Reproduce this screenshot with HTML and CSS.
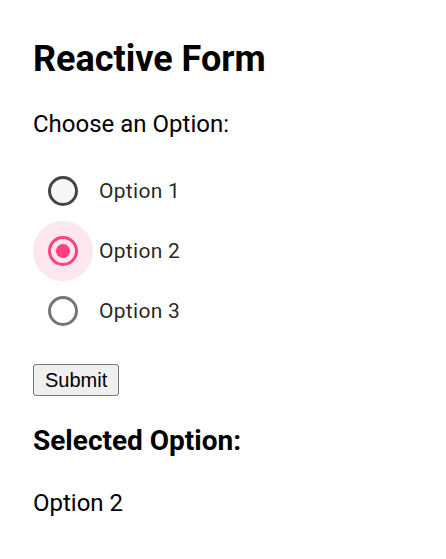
FILE: index.html
```html
<!DOCTYPE html>
<html>
<head>
<meta charset="utf-8">
<link rel="stylesheet" href="styles.css">
</head>
<body>
<h1 class="title">Reactive Form</h1>
<form class="form">
  <p class="prompt">Choose an Option:</p>
  <div class="radio-group">
    <label class="radio radio-hover">
      <span class="radio-touch"><span class="radio-outer"></span></span>
      <span class="radio-label">Option 1</span>
    </label>
    <label class="radio radio-checked">
      <span class="radio-touch"><span class="radio-outer"><span class="radio-inner"></span></span></span>
      <span class="radio-label">Option 2</span>
    </label>
    <label class="radio">
      <span class="radio-touch"><span class="radio-outer"></span></span>
      <span class="radio-label">Option 3</span>
    </label>
  </div>
  <button type="button" class="submit">Submit</button>
</form>
<h3 class="result-title">Selected Option:</h3>
<p class="result">Option 2</p>
</body>
</html>
```
FILE: styles.css
```css
html, body {
  margin: 0;
  padding: 0;
  background: #fff;
}
body {
  padding: 38px 33px 0;
  font-family: Roboto, "Noto Sans", sans-serif;
  color: #000;
}
.title {
  margin: 0;
  font-size: 36px;
  font-weight: 700;
  line-height: 42px;
}
.form {
  margin: 0;
}
.prompt {
  margin: 30px 0 0;
  font-size: 24px;
  line-height: 28px;
}
.radio-group {
  margin-top: 23px;
  display: flex;
  flex-direction: column;
}
.radio {
  display: flex;
  align-items: center;
  height: 60px;
}
.radio-touch {
  width: 60px;
  height: 60px;
  border-radius: 50%;
  display: flex;
  align-items: center;
  justify-content: center;
}
.radio-outer {
  box-sizing: border-box;
  width: 30px;
  height: 30px;
  border: 3px solid #757575;
  border-radius: 50%;
  display: flex;
  align-items: center;
  justify-content: center;
}
.radio-hover .radio-outer {
  border-color: #444;
  background: #f6f6f6;
}
.radio-checked .radio-touch {
  background: #fde6ee;
}
.radio-checked .radio-outer {
  border-color: #ff4081;
}
.radio-inner {
  width: 14px;
  height: 14px;
  border-radius: 50%;
  background: #ff4081;
}
.radio-label {
  padding-left: 6px;
  font-size: 21px;
  letter-spacing: 0.3px;
  color: rgba(0, 0, 0, 0.87);
}
.submit {
  display: block;
  margin-top: 23px;
  height: 32px;
  padding: 0 11px;
  font-family: "Liberation Sans", Arial, sans-serif;
  font-size: 20px;
  color: #000;
  background: #efefef;
  border: 1px solid #767676;
  border-radius: 3px;
}
.result-title {
  margin: 28px 0 0;
  font-size: 28px;
  font-weight: 700;
  line-height: 33px;
}
.result {
  margin: 32px 0 0;
  font-size: 24px;
  line-height: 28px;
}
```
